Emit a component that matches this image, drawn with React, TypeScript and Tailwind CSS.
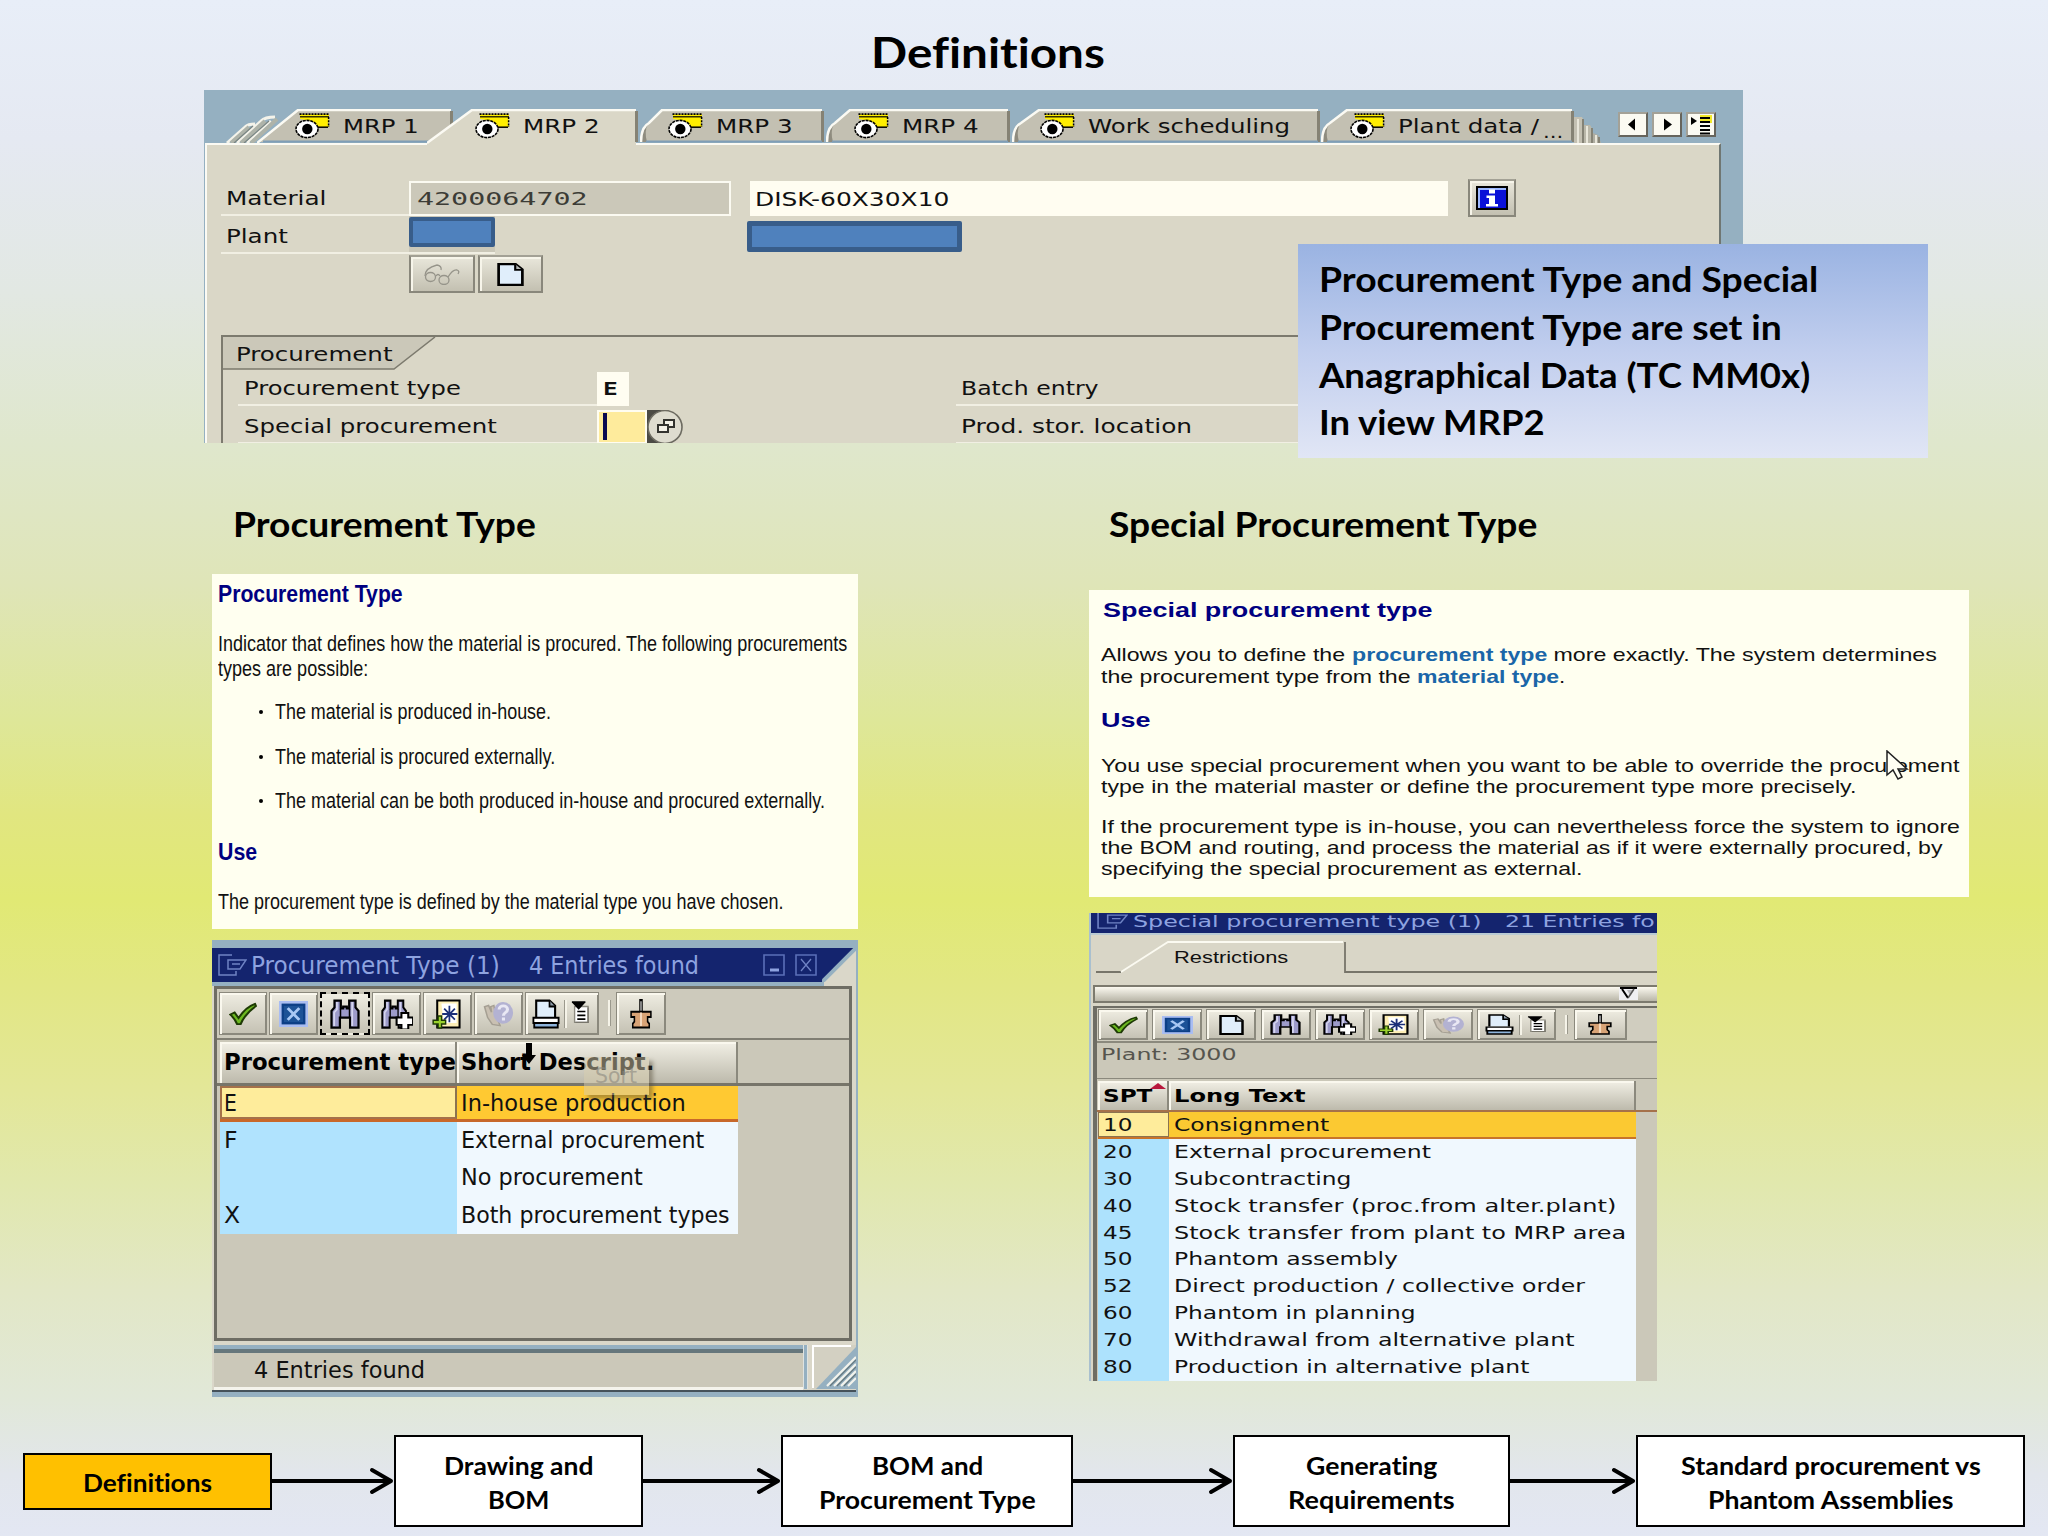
import React, { useLayoutEffect, useRef, useState } from "react";
import clsx from "clsx";

type FitProps = { w: number; className?: string; children: React.ReactNode };

// One line of text, stretched or squeezed horizontally to fill w pixels
const Fit = ({ w, className, children }: FitProps) => {
  const ref = useRef<HTMLSpanElement>(null);
  const [scale, setScale] = useState(1);
  useLayoutEffect(() => {
    if (ref.current) setScale(w / ref.current.offsetWidth);
  }, [w]);
  return (
    <span className={clsx("block shrink-0 whitespace-pre", className)} style={{ width: w }}>
      <span ref={ref} className="inline-block origin-left align-top" style={{ transform: `scaleX(${scale})` }}>
        {children}
      </span>
    </span>
  );
};

const LATO = "font-['Lato',sans-serif] font-bold text-black [font-variant-ligatures:none]";
const DEJA = "font-['DejaVu_Sans',sans-serif]";
const ARIAL = "font-['Liberation_Sans',sans-serif]";

/* ---------- icons ---------- */

type IconProps = { className?: string };

const Svg = ({ className, children, box = "0 0 20 20" }: IconProps & { children: React.ReactNode; box?: string }) => (
  <svg viewBox={box} preserveAspectRatio="none" className={clsx("block shrink-0", className)}>
    {children}
  </svg>
);

const ViewIcon = () => (
  <Svg box="0 0 35 26" className="w-[35px] h-[26px]">
    <path d="M5 1.2H34V4l-1.5 1.2L34 7v2l-1.5 1.2L34 12v2H22L17 8 5 6z" fill="#ffee00" />
    <path d="M4.500 1.200H34" stroke="#000" strokeWidth="1.800" strokeDasharray="2 1" />
    <path d="M5 3.800h29" stroke="#000" strokeWidth="1.200" />
    <path d="M33.600 4v10" stroke="#000" strokeWidth="1.500" strokeDasharray="2 1.200" />
    <path d="M23 14.200h10" stroke="#000" strokeWidth="1.500" />
    <ellipse cx="12" cy="16" rx="11" ry="8.600" fill="#fff" stroke="#000" strokeWidth="1.600" strokeDasharray="3 0.800" />
    <circle cx="12.300" cy="16" r="5.200" fill="#000" />
  </Svg>
);

const CheckIcon = ({ className }: IconProps) => (
  <Svg className={className}>
    <path d="M1 10.5l3-1.8 2.8 4.6C9.5 8.6 13.5 3.6 18.6 1.6l.6 1.8C14.8 7 10.7 12 8.3 18.4H5.8C4.6 15.4 3 12.6 1 10.5z" fill="#6cb820" stroke="#1e3a05" strokeWidth="1.5" />
  </Svg>
);

const CancelIcon = ({ className }: IconProps) => (
  <Svg className={className}>
    <rect width="20" height="20" fill="#a9bdf2" />
    <rect x="1.8" y="2" width="16.4" height="16" fill="#0d3f86" />
    <rect x="3.4" y="3.8" width="13.2" height="12.4" fill="#1c5297" />
    <path d="M6 5.5l8 9M14 5.5l-8 9" stroke="#a9c8f4" strokeWidth="2" />
  </Svg>
);

const PageIcon = ({ className }: IconProps) => (
  <Svg className={className}>
    <path d="M1.2 1h12.6l5 4.6V19H1.2z" fill="#e0eefb" stroke="#000" strokeWidth="2" />
    <path d="M13.5 1v5h5.3" fill="#b5b9b8" stroke="#000" strokeWidth="1.6" />
  </Svg>
);

const Binocular = () => (
  <>
    <path d="M3 1h4.200v5.200h1.600V5h2.400v1.200h1.600V1H17v4.600L19 8v11h-5.600v-6.600H6.600V19H1V8l2-2.400z" fill="#9d9bca" stroke="#000" strokeWidth="1.500" />
    <path d="M4.600 2v5L2.800 9v9" stroke="#d5d5ee" strokeWidth="1.200" fill="none" />
    <path d="M14.800 2v16" stroke="#d5d5ee" strokeWidth="1.200" fill="none" />
    <path d="M7 6.600v5.600M13 6.600v5.600" stroke="#000" strokeWidth="1" />
  </>
);

const FindIcon = ({ className }: IconProps) => (
  <Svg className={className}>
    <Binocular />
  </Svg>
);

const FindMoreIcon = ({ className }: IconProps) => (
  <Svg className={className}>
    <g transform="scale(0.82 1)">
      <Binocular />
    </g>
    <path d="M10.400 13h3v-3h3v3h3v3.600h-3v3h-3v-3h-3z" fill="#fff" stroke="#000" strokeWidth="2.600" />
    <path d="M10.400 13h3v-3h3v3h3v3.600h-3v3h-3v-3h-3z" fill="#fff" />
  </Svg>
);

const CreateIcon = ({ className }: IconProps) => (
  <Svg className={className}>
    <path d="M3.6 1h15.4v18H3.6z" fill="#fdeeb5" stroke="#000" strokeWidth="1.4" />
    <path d="M6.5 3h10.5v13H8z" fill="#fff" />
    <path d="M12 4.5v11M7 10h10.5M8.4 6.4l7.4 7.4M15.8 6.4l-7.4 7.4" stroke="#1b2f78" strokeWidth="1.2" />
    <path d="M4.2 11.4h2.4v2.8h2.8v2.4H6.6v2.8H4.2v-2.8H.8v-2.4h3.4z" fill="#9bd22d" stroke="#1e3a05" strokeWidth="1" />
  </Svg>
);

const HelpIcon = ({ className }: IconProps) => (
  <Svg className={className}>
    <path d="M1 5l2 8 3 5 5 1-3-9-1-6-2 1 .5 4L3.600 4z" fill="#c9c0b2" stroke="#a59f93" strokeWidth="1" />
    <ellipse cx="13" cy="9.5" rx="6.4" ry="8" fill="#b3b2d2" />
    <path d="M10.4 7c0-3.600 5.400-3.600 5.400 0 0 2.400-2.600 2.200-2.600 4.600M13.200 13v2.200" stroke="#e9e8f4" strokeWidth="2" fill="none" />
  </Svg>
);

const PrintIcon = ({ className }: IconProps) => (
  <Svg className={className}>
    <path d="M3 12V1h9.500l4 3.500V12" fill="#e0eefb" stroke="#000" strokeWidth="1.500" />
    <path d="M12.500 1v4h4" fill="#8c9aa8" stroke="#000" strokeWidth="1.200" />
    <path d="M1 12.500h18v3.500H1z" fill="#fff" stroke="#000" strokeWidth="1.300" />
    <path d="M1.600 16h16.800v3H1.600z" fill="#8eb4dc" stroke="#000" strokeWidth="1.300" />
  </Svg>
);

const ListIcon = ({ className }: IconProps) => (
  <Svg className={className}>
    <path d="M4 5h15v14.500H4z" fill="#fff" stroke="#8d8b80" strokeWidth="1.500" />
    <path d="M19 6v13.500H5" fill="none" stroke="#77756b" strokeWidth="1.500" />
    <path d="M7 9.500h9M7 13h9M7 16.500h9" stroke="#000" strokeWidth="1.500" />
    <path d="M1 1h15M3 2h11l-5.500 5z" fill="#000" stroke="#000" strokeWidth="1.500" />
  </Svg>
);

const PinIcon = ({ className }: IconProps) => (
  <Svg className={className}>
    <path d="M10 0v9" stroke="#000" strokeWidth="3.200" />
    <path d="M10 1.500v7" stroke="#eee" strokeWidth="1" />
    <path d="M1 8.500h18v3.500h-3v3l1.500 1.500V19h-15v-2.500L4 15v-3H1z" fill="#d8a376" stroke="#000" strokeWidth="1.400" />
    <path d="M10 9v9" stroke="#f4d9bf" strokeWidth="1.800" />
  </Svg>
);

const WindowIcon = ({ className }: IconProps) => (
  <Svg box="0 0 29 22" className={className}>
    <path d="M14 1H1v20h17v-4M10 6h18l-6 9H10z M14 10h8" fill="none" stroke="#6f83c4" strokeWidth="1.500" />
  </Svg>
);

/* ---------- master record tabs ---------- */

type TabProps = { w: number; slant: number; box: string; icon: string; label: string; lw: number; active?: boolean; dots?: boolean };

const tabs: TabProps[] = [
  { w: 196, slant: 41, box: "w-[196px]", icon: "pl-[38px]", label: "MRP 1", lw: 76 },
  { w: 211, slant: 45, box: "w-[211px] -ml-[26px]", icon: "pl-[48px]", label: "MRP 2", lw: 77, active: true },
  { w: 184, slant: 22, box: "w-[184px] ml-[2px]", icon: "pl-[28px]", label: "MRP 3", lw: 77 },
  { w: 184, slant: 24, box: "w-[184px] ml-[2px]", icon: "pl-[28px]", label: "MRP 4", lw: 77 },
  { w: 308, slant: 27, box: "w-[308px] ml-[2px]", icon: "pl-[28px]", label: "Work scheduling", lw: 202 },
  { w: 253, slant: 26, box: "w-[253px] ml-px", icon: "pl-[29px]", label: "Plant data /", lw: 141, dots: true },
];

// The active tab slants down to the base line, the others stop short and curve in
const Tab = ({ w, slant, box, icon, label, lw, active, dots }: TabProps) => {
  const round = !active && slant < 40;
  const edge = round ? `M1 33Q1 18 9 14L${slant} 1H${w - 2}` : `M0 34L${slant} 1H${w - 2}`;
  return (
    <div className={clsx("relative flex h-[37px] shrink-0 items-start", box, icon, active && "z-10")}>
      <svg className="absolute inset-0" width={w} height="37" viewBox={`0 0 ${w} 37`}>
        <path d={`${edge}V${active ? 37 : 33}H0z`} fill={active ? "#dad7c7" : "#c3c0b2"} />
        {round && <path d="M1 33Q1 19 8 15Q4 22 7 33z" fill="#8f8c7f" />}
        <path d={edge} fill="none" stroke="#fbfaf3" strokeWidth="2.500" />
        <path d={`M${w - 1.500} 2V33`} stroke="#858274" strokeWidth="3" />
        {!active && <path d={`M6 32.500H${w - 2}`} stroke="#7f9db6" strokeWidth="2" />}
      </svg>
      <div className="relative mt-[4px]">
        <ViewIcon />
      </div>
      <Fit w={lw} className="relative ml-[13px] h-[34px] text-[19.5px] leading-[36px]">{label}</Fit>
      {dots && <Fit w={20} className="relative ml-[4px] h-[34px] pt-[5px] text-[18px] leading-[36px]">...</Fit>}
    </div>
  );
};

const NavButton = ({ children }: { children: React.ReactNode }) => (
  <div className="h-[25px] w-[30px] border-2 border-[#a3a197] border-r-[#66645c] border-b-[#66645c] bg-[#fbfaf2]">{children}</div>
);

const FORM = "text-[19.8px] text-[#111]";
const RAISED = "border-2 border-[#89877b] border-t-[#a3a195] bg-gradient-to-b from-[#e9e7db] to-[#c3c0b1] shadow-[inset_2px_2px_0_#f7f5ea]";

const MasterRecord = () => (
  <section className={clsx("relative ml-[204px] flex h-[353px] w-[1539px] flex-col overflow-hidden bg-[#95b0c1]", DEJA, FORM)}>
    <div className="flex h-[53px] shrink-0 items-start pt-[19px] pl-[23px]">
      <svg className="block h-[36px] w-[30px] shrink-0 overflow-visible" viewBox="0 0 30 36">
        <path d="M0 34L18 18Q21 15 28 15M10 34L34 12Q38 8 48 8M20 34L44 12" fill="none" stroke="#f4f3ea" strokeWidth="3" />
        <path d="M4 34L22 18M14 34L38 12M24 34L50 10" fill="none" stroke="#aeb3a9" strokeWidth="4" />
        <path d="M7 34L26 17M17 34L42 12" fill="none" stroke="#7b8683" strokeWidth="1.200" />
      </svg>
      {tabs.map((t) => (
        <Tab key={t.label} {...t} />
      ))}
      <svg className="block h-[34px] w-[27px] shrink-0" viewBox="0 0 27 34">
        <path d="M0 8h8l2 4v22H0z" fill="#c3c0b2" />
        <path d="M10 16h6l3 5v13h-9z" fill="#b9b7a9" />
        <path d="M19 24l5 2 3 8h-8z" fill="#aeada1" />
        <path d="M4 10v24M13 17v17M22 26v8" stroke="#e8e6da" strokeWidth="2" />
        <path d="M9 10v24M18 19v15M25 28v6" stroke="#858376" strokeWidth="2" />
      </svg>
      <div className="ml-[17px] flex gap-[4px] pt-[3px]">
        <NavButton>
          <svg viewBox="0 0 26 21" className="block h-[21px] w-[26px]"><path d="M8 10.500l7-6v12z" /></svg>
        </NavButton>
        <NavButton>
          <svg viewBox="0 0 26 21" className="block h-[21px] w-[26px]"><path d="M18 10.500l-8-6v12z" /></svg>
        </NavButton>
        <NavButton>
          <svg viewBox="0 0 26 21" className="block h-[21px] w-[26px]">
            <path d="M12 3h12M12 7h12" stroke="#f2ea2a" strokeWidth="4" />
            <path d="M3 3v8l6-4z" />
            <path d="M12 4h10M12 8h10M12 12h10M12 16h10M12 19.500h10" stroke="#000" strokeWidth="1.800" />
          </svg>
        </NavButton>
      </div>
    </div>

    <div className="ml-px flex w-[1516px] grow flex-col border-t-2 border-r-2 border-l-2 border-[#fbfaf3] border-r-[#6f7672] bg-[#dad7c7] pt-[36px] pl-[14px]">
      <div className="flex h-[35px]">
        <div className="w-[188px] border-b-2 border-[#f1efe3] pl-[5px] leading-[36px]"><Fit w={100}>Material</Fit></div>
        <div className="w-[322px] border-2 border-[#fbfaf1] bg-[#cbc8b9] pl-[6px] font-['DejaVu_Sans_Mono',monospace] text-[17.500px] leading-[32px] text-[#3c3c36]">
          <Fit w={170}>4200064702</Fit>
        </div>
        <div className="ml-[19px] w-[698px] bg-[#fffdf1] pl-[5px] leading-[37px]"><Fit w={194}>DISK-60X30X10</Fit></div>
        <div className={clsx("-mt-[2px] ml-[20px] flex h-[38px] w-[48px] items-center justify-center", RAISED)}>
          <Svg box="0 0 32 24" className="h-[24px] w-[32px]">
            <path d="M0 0h32v24H0z" fill="#000" />
            <path d="M2 2h28v20H2z" fill="#9db8ff" />
            <path d="M4 4h26v18H4z" fill="#0a10d8" />
            <path d="M13 3.500h6v4h-6zM10.500 9.500H19v8.500h3v2.500H10V18h3v-6h-2.500z" fill="#fff" />
          </Svg>
        </div>
      </div>

      <div className="flex h-[39px]">
        <div className="h-[38px] w-[188px] border-b-2 border-[#f1efe3] pl-[5px] leading-[42px]"><Fit w={62}>Plant</Fit></div>
        <div className="h-[38px] w-[86px] border-b-2 border-[#f1efe3] bg-[#cbc8b9] pt-px">
          <div className="h-[30px] w-[86px] rounded-[2px] border-[4px] border-[#385d8a] bg-[#4f81bd]" />
        </div>
        <div className="mt-[5px] ml-[252px] h-[31px] w-[215px] rounded-[2px] border-[5px] border-[#385d8a] bg-[#4f81bd]" />
      </div>

      <div className="flex h-[80px] gap-[3px] pl-[188px]">
        <div className={clsx("flex h-[38px] w-[66px] items-center justify-center", RAISED)}>
          <Svg box="0 0 36 21" className="h-[21px] w-[36px]">
            <path d="M1 12c0-6 4-9 12-11M13 1q5 1 4 5M12 12q2-3 4 0M24 13q5-8 9-7 3 1 1 4" fill="none" stroke="#96948a" strokeWidth="1.300" />
            <ellipse cx="6.500" cy="13" rx="5" ry="4.500" fill="none" stroke="#96948a" strokeWidth="1.300" />
            <ellipse cx="20" cy="16" rx="5" ry="4.500" fill="none" stroke="#96948a" strokeWidth="1.300" />
          </Svg>
        </div>
        <div className={clsx("flex h-[38px] w-[65px] items-center justify-center", RAISED)}>
          <PageIcon className="h-[23px] w-[27px]" />
        </div>
      </div>

      <div className="flex grow flex-col border-t-2 border-l-2 border-[#7c7a6e]">
        <div className="relative h-[33px] pl-[13px] leading-[36px]">
          <svg className="absolute top-0 left-0" width="214" height="33" viewBox="0 0 214 33">
            <path d="M0 0h212L171 32H0z" fill="#cbc8b9" />
            <path d="M212 0L171 32H0" fill="none" stroke="#7c7a6e" strokeWidth="1.500" />
          </svg>
          <Fit w={156} className="relative">Procurement</Fit>
        </div>
        <div className="mt-[2px] flex h-[34px]">
          <div className="ml-[15px] w-[359px] border-b-2 border-[#f1efe3] pl-[6px] leading-[34px]"><Fit w={217}>Procurement type</Fit></div>
          <div className="w-[32px] bg-[#fffdf1] pl-[6px] font-['DejaVu_Sans_Mono',monospace] text-[18px] leading-[33px] font-bold"><Fit w={15}>E</Fit></div>
          <div className="ml-[327px] grow border-b-2 border-[#f1efe3] pl-[5px] leading-[34px]"><Fit w={137}>Batch entry</Fit></div>
        </div>
        <div className="mt-[4px] flex h-[34px]">
          <div className="ml-[15px] w-[359px] border-b-2 border-[#f1efe3] pl-[6px] leading-[34px]"><Fit w={253}>Special procurement</Fit></div>
          <div className="w-[50px] border-2 border-[#fffdf1] bg-[#feeb9c] pt-px pl-[4px]"><div className="h-[27px] w-[4px] bg-[#0a0a50]" /></div>
          <Svg box="0 0 36 34" className="h-[34px] w-[36px]">
            <path d="M0 0h16v34H0z" fill="#4b4a44" />
            <ellipse cx="18" cy="17" rx="17" ry="16.500" fill="#dedccf" stroke="#6d6b61" strokeWidth="1.600" />
            <path d="M17 10h10v7H17z" fill="#f4f2e8" stroke="#33332f" strokeWidth="2" />
            <path d="M11 15h10v7H11z" fill="#f4f2e8" stroke="#33332f" strokeWidth="2" />
          </Svg>
          <div className="ml-[273px] grow border-b-2 border-[#f1efe3] pl-[5px] leading-[34px]"><Fit w={231}>Prod. stor. location</Fit></div>
        </div>
      </div>
    </div>
  </section>
);

const Callout = () => (
  <aside className={clsx("absolute top-[244px] left-[1298px] z-20 h-[214px] w-[630px] bg-gradient-to-b from-[#9ab3e2] via-[#c1ceee] to-[#e1e6f5] pt-[11px] pl-[21px] text-[34.500px] leading-[47.800px]", LATO)}>
    <Fit w={499}>Procurement Type and Special</Fit>
    <Fit w={463}>Procurement Type are set in</Fit>
    <Fit w={491}>Anagraphical Data (TC MM0x)</Fit>
    <Fit w={226}>In view MRP2</Fit>
  </aside>
);

/* ---------- help texts ---------- */

const Bullet = ({ w, className, children }: FitProps) => (
  <li className={clsx("flex h-[26px]", className)}>
    <span className="mt-[11px] mr-[12px] ml-[41px] size-[4px] shrink-0 rounded-full bg-black" />
    <Fit w={w}>{children}</Fit>
  </li>
);

const ProcurementHelp = () => (
  <article className={clsx("h-[355px] w-[646px] bg-[#fffff0] pt-[7px] pl-[6px] text-[21.500px] leading-[26px] text-[#111]", ARIAL)}>
    <h3 className="text-[23.500px] font-bold text-[#000080]"><Fit w={185}>Procurement Type</Fit></h3>
    <div className="mt-[25px] h-[48px] leading-[24.500px]">
      <Fit w={629}>Indicator that defines how the material is procured. The following procurements</Fit>
      <Fit w={150}>types are possible:</Fit>
    </div>
    <ul className="mt-[19px]">
      <Bullet w={276}>The material is produced in-house.</Bullet>
      <Bullet w={280} className="mt-[19px]">The material is procured externally.</Bullet>
      <Bullet w={550} className="mt-[18px]">The material can be both produced in-house and procured externally.</Bullet>
    </ul>
    <h3 className="mt-[25px] text-[23.500px] font-bold text-[#000080]"><Fit w={39}>Use</Fit></h3>
    <div className="mt-[24px]"><Fit w={565}>The procurement type is defined by the material type you have chosen.</Fit></div>
  </article>
);

const link = "font-bold text-[#1a66a8]";

const SpecialHelp = () => (
  <article className={clsx("relative h-[307px] w-[880px] bg-[#fffff0] pt-[7px] pl-[12px] text-[18.500px] leading-[21px] text-[#111]", ARIAL)}>
    <h3 className="text-[20.500px] leading-[26px] font-bold text-[#000080]"><Fit w={330} className="ml-[2px]">Special procurement type</Fit></h3>
    <div className="mt-[21px] flex h-[21px]">
      <Fit w={251}>Allows you to define the </Fit>
      <Fit w={195} className={link}>procurement type</Fit>
      <Fit w={390}> more exactly. The system determines</Fit>
    </div>
    <div className="flex h-[21px] pt-px">
      <Fit w={316}>the procurement type from the </Fit>
      <Fit w={142} className={link}>material type</Fit>
      <Fit w={6}>.</Fit>
    </div>
    <h3 className="mt-[21px] text-[20.500px] leading-[26px] font-bold text-[#000080]"><Fit w={50}>Use</Fit></h3>
    <div className="mt-[23px] leading-[20.500px]">
      <Fit w={858}>You use special procurement when you want to be able to override the procurement</Fit>
      <Fit w={755}>type in the material master or define the procurement type more precisely.</Fit>
    </div>
    <div className="mt-[20px] leading-[20.800px]">
      <Fit w={859}>If the procurement type is in-house, you can nevertheless force the system to ignore</Fit>
      <Fit w={842}>the BOM and routing, and process the material as if it were externally procured, by</Fit>
      <Fit w={482}>specifying the special procurement as external.</Fit>
    </div>
    <svg className="absolute top-[160px] left-[797px]" width="24" height="30" viewBox="0 0 24 30">
      <path d="M1 1v24l6-5 5 9 4-2-4-8h9z" fill="#fffff4" stroke="#222" strokeWidth="1.500" />
    </svg>
  </article>
);

/* ---------- value list dialogs ---------- */

const BUTTON = "flex shrink-0 items-center justify-center border border-[#8b897d] bg-gradient-to-b from-[#efede2] to-[#c4c1b3] shadow-[inset_2px_2px_0_#faf8ee,inset_-1px_-1px_0_#8b897d]";
const HEAD = "border-r-2 border-[#8b897d] bg-gradient-to-b from-[#f2f0e6] to-[#bdbaac] shadow-[inset_2px_2px_0_#faf8ee] font-bold text-black";

const shortRows = [
  { key: "F", text: "External procurement", w: 243 },
  { key: "", text: "No procurement", w: 182 },
  { key: "X", text: "Both procurement types", w: 269 },
];

const ProcurementDialog = () => (
  <div className={clsx("mt-[11px] flex h-[457px] w-[646px] flex-col border-t-[8px] border-r-2 border-[#95b0c1] bg-[#dad7c9]", DEJA)}>
    <div className="relative flex h-[34px] shrink-0 items-start overflow-hidden bg-[#14246e] pt-[6px] pl-[6px] text-[24px] leading-[25px] text-[#8ea3e0]">
      <WindowIcon className="h-[22px] w-[29px]" />
      <Fit w={249} className="ml-[4px]">Procurement Type (1)</Fit>
      <Fit w={170} className="ml-[29px]">4 Entries found</Fit>
      <svg className="ml-[64px] block" width="54" height="22" viewBox="0 0 54 22">
        <path d="M1 1h20v20H1zM33 1h20v20H33z" fill="none" stroke="#5a6fb8" strokeWidth="1.600" />
        <path d="M7 16h9" stroke="#8ea3e0" strokeWidth="3" />
        <path d="M38 5l10 12M48 5L38 17" stroke="#6f83c4" strokeWidth="1.300" />
      </svg>
      <svg className="absolute top-0 right-0" width="34" height="34" viewBox="0 0 34 34">
        <path d="M34 0v34H0z" fill="#dad7c9" />
        <path d="M34 0L0 34" stroke="#95b0c1" strokeWidth="4" />
      </svg>
    </div>
    <div className="h-[4px] w-[612px] shrink-0 bg-[#95b0c1]" />

    <div className="ml-[2px] flex h-[355px] w-[638px] shrink-0 flex-col border-[3px] border-[#6e6d64] bg-[#cbc8b9]">
      <div className="flex h-[51px] shrink-0 items-start gap-[2px] border-b-2 border-[#807e73] bg-[#cdcabc] pt-[3px] pl-[2px]">
        <div className={clsx(BUTTON, "h-[43px] w-[48px]")}><CheckIcon className="h-[24px] w-[28px]" /></div>
        <div className={clsx(BUTTON, "h-[43px] w-[49px]")}><CancelIcon className="h-[26px] w-[29px]" /></div>
        <div className="flex h-[43px] w-[50px] shrink-0 items-center justify-center border-2 border-dashed border-black bg-gradient-to-b from-[#efede2] to-[#c4c1b3]"><FindIcon className="h-[30px] w-[30px]" /></div>
        <div className={clsx(BUTTON, "h-[43px] w-[49px]")}><FindMoreIcon className="h-[30px] w-[32px]" /></div>
        <div className={clsx(BUTTON, "h-[43px] w-[49px]")}><CreateIcon className="mr-[3px] h-[30px] w-[29px]" /></div>
        <div className={clsx(BUTTON, "h-[43px] w-[49px]")}><HelpIcon className="h-[27px] w-[31px]" /></div>
        <div className={clsx(BUTTON, "h-[43px] w-[74px] gap-[4px]")}>
          <PrintIcon className="h-[30px] w-[28px]" />
          <span className="h-[28px] w-[3px] border-l border-[#9b998d] bg-[#f5f3e8]" />
          <ListIcon className="mr-[3px] mb-[4px] h-[22px] w-[18px]" />
        </div>
        <div className="mt-[8px] ml-[7px] h-[26px] w-[3px] border-r border-[#9b998d] bg-[#f5f3e8]" />
        <div className={clsx(BUTTON, "ml-[3px] h-[43px] w-[50px]")}><PinIcon className="h-[30px] w-[22px]" /></div>
      </div>

      <div className="relative mt-[2px] flex h-[44px] shrink-0 border-b-[3px] border-[#77756a] pl-[3px] text-[22.500px] leading-[41px]">
        <div className={clsx(HEAD, "w-[237px] pl-[4px]")}><Fit w={232}>Procurement type</Fit></div>
        <div className={clsx(HEAD, "w-[281px] pl-[4px]")}><Fit w={193}>Short Descript.</Fit></div>
        <svg className="absolute top-px left-[305px]" width="14" height="22" viewBox="0 0 14 22">
          <path d="M4 0h6v12h4l-7 9-7-9h4z" />
        </svg>
        <div className="absolute top-[15px] left-[367px] z-10 h-[38px] w-[65px] bg-[#d8cdae]/50 pl-[11px] text-[21px] leading-[38px] text-[#8b887e]/60 shadow-[4px_4px_4px_rgba(80,70,50,0.45)]">
          <Fit w={42}>Sort</Fit>
        </div>
      </div>

      <div className="ml-[3px] w-[518px] text-[23.500px] leading-[36px] text-[#111]">
        <div className="flex h-[36px] border-b-[3px] border-[#c8682a]">
          <div className="w-[237px] border-2 border-[#a5714a] border-r-[#8b7350] bg-[#feec9b] pl-[2px] leading-[31px]"><Fit w={13}>E</Fit></div>
          <div className="w-[281px] bg-[#ffc932] pl-[4px] leading-[35px]"><Fit w={225}>In-house production</Fit></div>
        </div>
        {shortRows.map((r) => (
          <div key={r.text} className="flex h-[37.300px]">
            <div className="w-[237px] bg-[#b0e3fe] pl-[4px]">{r.key && <Fit w={r.key === "X" ? 16 : 14}>{r.key}</Fit>}</div>
            <div className="w-[281px] bg-[#f0f8fe] pl-[4px]"><Fit w={r.w}>{r.text}</Fit></div>
          </div>
        ))}
      </div>
    </div>

    <div className="mt-[4px] flex h-[44px] shrink-0">
      <div className="ml-[2px] flex h-[43px] w-[589px] flex-col border-t-[4px] border-[#95b0c1]">
        <div className="grow border-t-[4px] border-b-[3px] border-[#66777c] border-b-[#f5f4ec] bg-[#cbc8b9] pl-[40px] text-[23.500px] leading-[34px] text-[#111]"><Fit w={171}>4 Entries found</Fit></div>
      </div>
      <div className="h-[44px] w-[5px] border-x border-[#dfe3e0] bg-[#95b0c1]" />
      <svg className="ml-[4px] block" width="44" height="44" viewBox="0 0 44 44">
        <path d="M0 0h44v44H0z" fill="#d3d0c2" />
        <path d="M1 43V1h38" fill="none" stroke="#fff" strokeWidth="2" />
        <path d="M44 2v42H4z" fill="#95b0c1" />
        <path d="M44 12L15 41M44 19L22 41M44 26L29 41M44 33L36 41" stroke="#f3f3ec" strokeWidth="2.200" />
        <path d="M44 15L18 41M44 22L25 41M44 29L32 41" stroke="#66777c" strokeWidth="1.200" />
      </svg>
    </div>
    <div className="mt-px h-[2px] shrink-0 bg-[#45525a]" />
    <div className="grow bg-[#95b0c1]" />
  </div>
);

const longRows = [
  { key: "20", text: "External procurement", w: 257 },
  { key: "30", text: "Subcontracting", w: 178 },
  { key: "40", text: "Stock transfer (proc.from alter.plant)", w: 442 },
  { key: "45", text: "Stock transfer from plant to MRP area", w: 452 },
  { key: "50", text: "Phantom assembly", w: 224 },
  { key: "52", text: "Direct production / collective order", w: 411 },
  { key: "60", text: "Phantom in planning", w: 242 },
  { key: "70", text: "Withdrawal from alternative plant", w: 400 },
  { key: "80", text: "Production in alternative plant", w: 355 },
];

const SpecialDialog = () => (
  <div className={clsx("mt-[16px] flex h-[468px] w-[568px] flex-col overflow-hidden border-l-2 border-[#a9c0cf] bg-[#d9d6c7]", DEJA)}>
    <div className="flex h-[20px] shrink-0 items-start overflow-hidden bg-[#14246e] pl-[6px] text-[16.500px] leading-[18px] text-[#8ea3e0]">
      <WindowIcon className="-mt-[3px] h-[19px] w-[31px]" />
      <Fit w={349} className="ml-[5px]">Special procurement type (1)</Fit>
      <Fit w={150} className="ml-[23px]">21 Entries fo</Fit>
    </div>
    <div className="relative h-[52px] shrink-0 border-t-2 border-[#b9cad3] pt-[10px] pl-[83px] text-[16.500px] leading-[24px] text-[#111]">
      <svg className="absolute top-0 left-0" width="566" height="44" viewBox="0 0 566 44">
        <path d="M5 37H30M254 7V37H566" fill="none" stroke="#77756a" strokeWidth="1.800" />
        <path d="M30 37L77 7H252" fill="none" stroke="#fbfaf1" strokeWidth="1.800" />
      </svg>
      <div className={ARIAL}><Fit w={114} className="relative">Restrictions</Fit></div>
    </div>
    <div className="ml-[2px] flex h-[18px] shrink-0 items-start justify-end border-y-2 border-l-2 border-[#7c7a6e] bg-gradient-to-b from-[#fbf9f0] to-[#b9b6a8] pr-[19px]">
      <svg className="block" width="19" height="13" viewBox="0 0 19 13">
        <path d="M0 0h19v13H0z" fill="#efeff2" />
        <path d="M8 3h7l-3.500 6z" fill="#b9b9bd" />
        <path d="M1 1h17M3 2l6 9" fill="none" stroke="#000" strokeWidth="2" />
        <path d="M9 11l6-9" fill="none" stroke="#555" strokeWidth="1.500" />
      </svg>
    </div>
    <div className="mt-[3px] ml-[2px] flex grow flex-col border-t-[2px] border-l-[4px] border-[#6e6d64] bg-[#cbc8b9]">
      <div className="flex h-[35px] shrink-0 items-start gap-[4.200px] border-b-2 border-[#8b897d] bg-[#d0cdbf] pt-px pl-px">
        <div className={clsx(BUTTON, "h-[31px] w-[50px]")}><CheckIcon className="h-[18px] w-[29px]" /></div>
        <div className={clsx(BUTTON, "h-[31px] w-[50px]")}><CancelIcon className="h-[18px] w-[31px]" /></div>
        <div className={clsx(BUTTON, "h-[31px] w-[50px]")}><PageIcon className="h-[20px] w-[25px]" /></div>
        <div className={clsx(BUTTON, "h-[31px] w-[50px]")}><FindIcon className="h-[21px] w-[31px]" /></div>
        <div className={clsx(BUTTON, "h-[31px] w-[50px]")}><FindMoreIcon className="h-[21px] w-[33px]" /></div>
        <div className={clsx(BUTTON, "h-[31px] w-[50px]")}><CreateIcon className="h-[21px] w-[31px]" /></div>
        <div className={clsx(BUTTON, "h-[31px] w-[50px]")}><HelpIcon className="h-[19px] w-[33px]" /></div>
        <div className={clsx(BUTTON, "h-[31px] w-[79px] gap-[5px]")}>
          <PrintIcon className="h-[21px] w-[29px]" />
          <span className="h-[20px] w-[3px] border-l border-[#9b998d] bg-[#f5f3e8]" />
          <ListIcon className="mr-[3px] mb-[2px] h-[16px] w-[19px]" />
        </div>
        <div className="mt-[6px] ml-[4px] h-[19px] w-[3px] border-r border-[#9b998d] bg-[#f5f3e8]" />
        <div className={clsx(BUTTON, "ml-[2px] h-[31px] w-[53px]")}><PinIcon className="h-[21px] w-[24px]" /></div>
      </div>
      <div className="h-[36px] shrink-0 border-b border-[#8b897d] pl-[4px] text-[16.500px] leading-[24px] text-[#56554e]"><Fit w={135}>Plant: 3000</Fit></div>
      <div className="relative mt-[2px] flex h-[31px] shrink-0 border-b-2 border-[#a5714a] pl-px text-[17px] leading-[30px]">
        <div className={clsx(HEAD, "w-[71px] pl-[5px]")}><Fit w={49}>SPT</Fit></div>
        <div className={clsx(HEAD, "w-[467px] pl-[5px]")}><Fit w={132}>Long Text</Fit></div>
        <svg className="absolute top-[2px] left-[53px]" width="16" height="6" viewBox="0 0 16 6"><path d="M0 6l8-6 8 6z" fill="#b8173c" /></svg>
      </div>
      <div className="ml-px w-[538px] text-[16.800px] leading-[26px] text-[#111]">
        <div className="flex h-[27px] border-b-2 border-[#c8742a]">
          <div className="w-[71px] border border-[#8b7350] bg-[#feec9b] pl-[4px] leading-[24px]"><Fit w={29}>10</Fit></div>
          <div className="w-[467px] bg-[#fbc932] pl-[5px]"><Fit w={155}>Consignment</Fit></div>
        </div>
        {longRows.map((r) => (
          <div key={r.key} className="flex h-[26.850px]">
            <div className="w-[71px] bg-[#ade2fd] pl-[5px]"><Fit w={29}>{r.key}</Fit></div>
            <div className="w-[467px] bg-[#f0f8fe] pl-[5px]"><Fit w={r.w}>{r.text}</Fit></div>
          </div>
        ))}
      </div>
    </div>
  </div>
);

/* ---------- process steps ---------- */

const Arrow = ({ w }: { w: number }) => (
  <svg className="block shrink-0 overflow-visible" width={w} height="28" viewBox={`0 0 ${w} 28`}>
    <path d={`M0 14H${w - 3}M${w - 22} 3L${w - 3} 14L${w - 22} 25`} fill="none" stroke="#000" strokeWidth="4" strokeLinecap="round" strokeLinejoin="round" />
  </svg>
);

const STEP = "flex shrink-0 flex-col items-center justify-center border-2 border-black pt-[3px] leading-[34px]";

const Steps = () => (
  <footer className={clsx("absolute top-[1435px] left-[23px] flex h-[92px] items-center text-[23.800px]", LATO)}>
    <div className={clsx(STEP, "h-[57px] w-[249px] bg-[#ffc000]")}><Fit w={129}>Definitions</Fit></div>
    <Arrow w={122} />
    <div className={clsx(STEP, "h-[92px] w-[249px] bg-white")}>
      <Fit w={150}>Drawing and</Fit>
      <Fit w={61}>BOM</Fit>
    </div>
    <Arrow w={138} />
    <div className={clsx(STEP, "h-[92px] w-[292px] bg-white")}>
      <Fit w={111}>BOM and</Fit>
      <Fit w={217}>Procurement Type</Fit>
    </div>
    <Arrow w={160} />
    <div className={clsx(STEP, "h-[92px] w-[277px] bg-white")}>
      <Fit w={132}>Generating</Fit>
      <Fit w={167}>Requirements</Fit>
    </div>
    <Arrow w={126} />
    <div className={clsx(STEP, "h-[92px] w-[389px] bg-white")}>
      <Fit w={300}>Standard procurement vs</Fit>
      <Fit w={246}>Phantom Assemblies</Fit>
    </div>
  </footer>
);

export default function App() {
  return (
    <main className="relative flex h-[1536px] w-[2048px] flex-col overflow-hidden bg-[linear-gradient(#e8eef8_0%,#e5e9f2_9%,#e2e8e3_19%,#dfe7cc_29%,#dfe5b8_38%,#dee798_47%,#e1e680_53%,#e1e974_58.5%,#e2e783_64%,#e3e798_71%,#e1e8ad_77%,#e2e7c6_84%,#e1e8d8_91%,#e2e6ec_96%,#e3e7f3_100%)]">
      <h1 className={clsx("flex h-[90px] shrink-0 pt-[22px] pl-[871px] text-[42.500px] leading-[60px]", LATO)}>
        <Fit w={234}>Definitions</Fit>
      </h1>
      <MasterRecord />
      <Callout />
      <div className="flex pt-[57px]">
        <div className="w-[877px] shrink-0 pl-[212px]">
          <h2 className={clsx("h-[74px] pl-[21px] text-[34.500px] leading-[48px]", LATO)}><Fit w={303}>Procurement Type</Fit></h2>
          <ProcurementHelp />
          <ProcurementDialog />
        </div>
        <div className="pl-[212px]">
          <h2 className={clsx("h-[90px] pl-[20px] text-[34.500px] leading-[48px]", LATO)}><Fit w={428}>Special Procurement Type</Fit></h2>
          <SpecialHelp />
          <SpecialDialog />
        </div>
      </div>
      <Steps />
    </main>
  );
}
